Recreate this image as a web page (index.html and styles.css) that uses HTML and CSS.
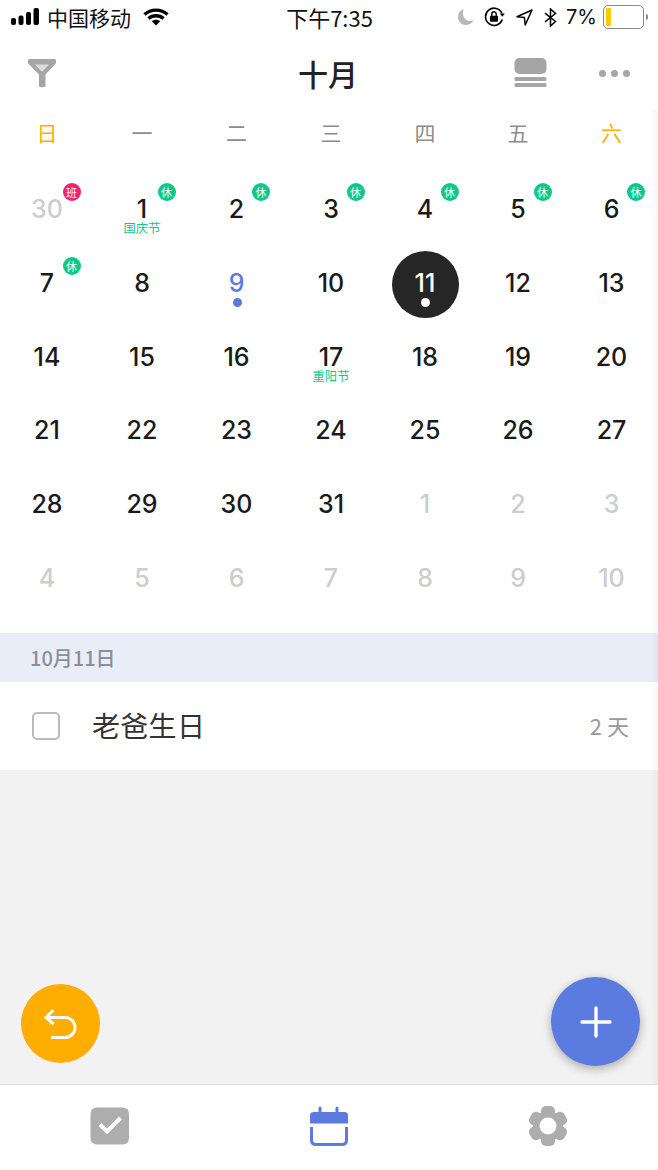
FILE: index.html
```html
<!doctype html>
<html lang="zh-CN">
  <head>
    <title>日历</title>
    <meta charset="UTF-8">
    <meta name="viewport" content="width=device-width, initial-scale=1">
    <link rel="stylesheet" href="styles.css">
  </head>
  <body>
<div class="phone">
  <div class="status">
    <div class="status-left">
      <svg class="signal" width="29" height="18" viewBox="0 0 29 18"><rect x="0" y="10" width="5" height="7" rx="2"/><rect x="7.500" y="7.500" width="5" height="9.500" rx="2"/><rect x="15" y="4" width="5" height="13" rx="2"/><rect x="22.500" y="0" width="5.500" height="17" rx="2"/></svg>
      <span class="carrier">中国移动</span>
      <svg class="wifi" width="26" height="18" viewBox="0 0 26 18"><path d="M1.500 6.500C8 .7 18 .7 24.500 6.500M5.500 10.500C9.800 6.800 16.200 6.800 20.500 10.500" fill="none" stroke="#000" stroke-width="3.400"/><path d="M8.800 13.200C11.200 11.200 14.800 11.200 17.200 13.200L13 17.500Z"/></svg>
    </div>
    <div class="clock">下午7:35</div>
    <div class="status-right">
      <svg width="18" height="18" viewBox="0 0 18 18"><path d="M6.500 1C3 2.500 1 5.500 1 9c0 4.500 3.500 8 8 8 3.200 0 6.200-1.800 7.800-4.800-1 .5-2.300.8-3.500.8C9 13 6 9.800 6 5.800c0-1.700.1-3.200.5-4.800Z" fill="#b8b8b8"/></svg>
      <svg class="gap-m" width="21" height="20" viewBox="0 0 21 20"><path d="M18.300 12.500A8.600 8.600 0 1 1 18 6.300" fill="none" stroke="#000" stroke-width="1.600"/><path d="M15.800 6.500h5l-2.500 3.200Z"/><rect x="6" y="8.800" width="8" height="6" rx="1"/><path d="M7.800 9V7a2.200 2.200 0 0 1 4.400 0v2" fill="none" stroke="#000" stroke-width="1.400"/></svg>
      <svg class="gap-s" width="17" height="17" viewBox="0 0 17 17"><path d="M16 1 1 7.800l7.400.8.800 7.400Z" fill="none" stroke="#000" stroke-width="1.500" stroke-linejoin="round"/></svg>
      <svg class="gap-s" width="13" height="19" viewBox="0 0 13 19"><path d="M1 5.200 11.500 13.500 6.500 18V1l5 4.500L1 13.800" fill="none" stroke="#000" stroke-width="1.500"/></svg>
      <span class="pct">7%</span>
      <div class="battery"><div class="charge"></div></div>
      <div class="nub"></div>
    </div>
  </div>

  <header class="nav">
    <svg class="nav-filter" width="30" height="30" viewBox="0 0 30 30"><path d="M1 2.500Q1 1 2.500 1h25Q29 1 29 2.500v2.800L18.500 16.500V28.500Q15 30 12 28.500V16.500L1 5.300Z" fill="#a5a5a5"/><path d="M8 6.500h14l-6 6.500h-2Z" fill="#fff" opacity=".6"/></svg>
    <h1 class="nav-title">十月</h1>
    <svg class="nav-view" width="33" height="30" viewBox="0 0 33 30"><rect x="0.500" y="0" width="32" height="16" rx="5" fill="#a5a5a5"/><rect x="0.500" y="19" width="32" height="4" rx="1.500" fill="#a5a5a5"/><rect x="0.500" y="25" width="32" height="4" rx="1.500" fill="#a5a5a5"/></svg>
    <div class="nav-more"><i></i><i></i><i></i></div>
  </header>

  <div class="weekdays">
    <span class="weekend">日</span><span>一</span><span>二</span><span>三</span><span>四</span><span>五</span><span class="weekend">六</span>
  </div>

  <div class="month">
    <div class="day off">30<b class="badge work">班</b></div>
    <div class="day">1<b class="badge">休</b><small>国庆节</small></div>
    <div class="day">2<b class="badge">休</b></div>
    <div class="day">3<b class="badge">休</b></div>
    <div class="day">4<b class="badge">休</b></div>
    <div class="day">5<b class="badge">休</b></div>
    <div class="day">6<b class="badge">休</b></div>

    <div class="day">7<b class="badge">休</b></div>
    <div class="day">8</div>
    <div class="day has-event">9<i class="dot"></i></div>
    <div class="day">10</div>
    <div class="day today">11<i class="dot"></i></div>
    <div class="day">12</div>
    <div class="day">13</div>

    <div class="day">14</div>
    <div class="day">15</div>
    <div class="day">16</div>
    <div class="day">17<small>重阳节</small></div>
    <div class="day">18</div>
    <div class="day">19</div>
    <div class="day">20</div>

    <div class="day">21</div>
    <div class="day">22</div>
    <div class="day">23</div>
    <div class="day">24</div>
    <div class="day">25</div>
    <div class="day">26</div>
    <div class="day">27</div>

    <div class="day">28</div>
    <div class="day">29</div>
    <div class="day">30</div>
    <div class="day">31</div>
    <div class="day off">1</div>
    <div class="day off">2</div>
    <div class="day off">3</div>

    <div class="day off">4</div>
    <div class="day off">5</div>
    <div class="day off">6</div>
    <div class="day off">7</div>
    <div class="day off">8</div>
    <div class="day off">9</div>
    <div class="day off">10</div>
  </div>

  <div class="date-bar">10月11日</div>
  <div class="todo">
    <div class="check"></div>
    <div class="todo-name">老爸生日</div>
    <div class="todo-left">2 天</div>
  </div>
  <div class="empty"></div>

  <nav class="tabs">
    <svg width="40" height="40" viewBox="0 0 40 40"><rect x="0.500" y="1.500" width="38.500" height="37" rx="6" fill="#adadad"/><path d="M10 18.500 17 25.500 30.500 12" fill="none" stroke="#fff" stroke-width="4"/></svg>
    <svg width="40" height="40" viewBox="0 0 40 40"><path d="M11 2v5M28 2v5" stroke="#5c7bde" stroke-width="3" stroke-linecap="round"/><path d="M1 17.500V9.500q0-3.500 3.500-3.500h31q3.500 0 3.500 3.500v8Z" fill="#5c7bde"/><path d="M2.500 21V34q0 4.500 4.500 4.500h26q4.500 0 4.500-4.500V21" fill="none" stroke="#5c7bde" stroke-width="3"/></svg>
    <svg width="40" height="40" viewBox="0 0 40 40"><g fill="#adadad"><circle cx="20" cy="20" r="15"/><rect x="13" y="0" width="14" height="40" rx="5"/><rect x="13" y="0" width="14" height="40" rx="5" transform="rotate(60 20 20)"/><rect x="13" y="0" width="14" height="40" rx="5" transform="rotate(120 20 20)"/></g><circle cx="20" cy="20" r="8.500" fill="#fff"/></svg>
  </nav>

  <button class="fab fab-back"><svg width="34" height="32" viewBox="0 0 34 32"><path d="M9.500 2 2 9.500 9.500 16M2.500 9.500H21a9.500 9.500 0 0 1 0 20H7" fill="none" stroke="#fff" stroke-width="3"/></svg></button>
  <button class="fab fab-add"><svg width="32" height="32" viewBox="0 0 32 32"><path d="M16 2v28M2 16h28" stroke="#fff" stroke-width="3.400" stroke-linecap="round"/></svg></button>
  <div class="edge"></div>
</div>
  </body>
</html>
```
FILE: styles.css
```css
html, body {
  margin: 0;
  font-family: Inter, "Noto Sans CJK SC", sans-serif;
  background: #fff;
}
.phone {
  position: relative;
  width: 658px;
  height: 1170px;
  overflow: hidden;
  display: flex;
  flex-direction: column;
}

/* status bar */
.status {
  height: 36px;
  box-sizing: border-box;
  padding: 0 10px 2px 11px;
  display: grid;
  grid-template-columns: 1fr auto 1fr;
  align-items: center;
  font-size: 21px;
  color: #111;
}
.status-left, .status-right {
  display: flex;
  align-items: center;
}
.status-right {
  justify-content: flex-end;
}
.carrier {
  margin: 0 12px 0 7px;
  font-family: "Noto Sans CJK SC", sans-serif;
}
.clock {
  font-family: "Noto Sans CJK SC", sans-serif;
  font-size: 22px;
}
.gap-m { margin-left: 9px; }
.gap-s { margin-left: 11px; }
.pct {
  margin: 0 6px 0 9px;
  font-size: 20px;
}
.battery {
  width: 35px;
  height: 18px;
  border: 1.5px solid #8a8a8a;
  border-radius: 5px;
  padding: 2px;
  display: flex;
  box-sizing: content-box;
}
.charge {
  width: 5px;
  background: #ffcc00;
  border-radius: 1px;
}
.nub {
  width: 2px;
  height: 6px;
  margin-left: 2px;
  background: #8a8a8a;
  border-radius: 0 2px 2px 0;
}

/* nav */
.nav {
  height: 74px;
  display: flex;
  align-items: center;
  padding: 0 27px;
}
.nav-title {
  margin: 0 0 0 241px;
  font-size: 30px;
  font-weight: 500;
  font-family: "Noto Sans CJK SC", sans-serif;
  color: #222;
}
.nav-view {
  margin-left: 156px;
}
.nav-more {
  margin-left: 52px;
  display: flex;
  gap: 5px;
}
.nav-more i {
  width: 7px;
  height: 7px;
  border-radius: 50%;
  background: #a5a5a5;
}

/* calendar */
.weekdays, .month {
  display: grid;
  grid-template-columns: 94px 96px 93px 96px 92px 94px 93px;
  text-align: center;
}
.weekdays {
  height: 61px;
  padding-top: 7px;
  box-sizing: border-box;
  font: 21px/30px "Noto Sans CJK SC", sans-serif;
  color: #8c8c8c;
}
.weekend {
  color: #ffae00;
}
.month {
  grid-auto-rows: 73.800px;
  height: 462px;
}
.day {
  position: relative;
  height: 74px;
  font-size: 25px;
  font-weight: 550;
  line-height: 76px;
  color: #1a1a1a;
}
.day.off {
  color: #cdcdcd;
}
.day.has-event {
  color: #5c7bde;
}
.badge {
  position: absolute;
  top: 12px;
  left: 50%;
  margin-left: 15.500px;
  width: 18px;
  height: 18px;
  border-radius: 50%;
  background: #0cc98a;
  color: #fff;
  font: 11px/18px "Noto Sans CJK SC", sans-serif;
}
.badge.work {
  background: #f5206e;
}
.day small {
  position: absolute;
  left: 0;
  right: 0;
  top: 49px;
  font: 12.300px/16px "Noto Sans CJK SC", sans-serif;
  color: #0cc98a;
}
.dot {
  position: absolute;
  left: 50%;
  top: 53px;
  margin-left: -4px;
  width: 9px;
  height: 9px;
  border-radius: 50%;
  background: #5c7bde;
}
.today {
  color: #fff;
  z-index: 0;
}
.today::before {
  content: "";
  position: absolute;
  z-index: -1;
  left: 50%;
  top: 6px;
  margin-left: -33.500px;
  width: 67px;
  height: 67px;
  border-radius: 50%;
  background: #262626;
}
.today .dot {
  background: #fff;
}

/* list */
.date-bar {
  height: 49px;
  padding-left: 30px;
  background: #e9edf8;
  color: #8a8f99;
  font: 500 20px/49px "Noto Sans CJK SC", sans-serif;
}
.todo {
  height: 88px;
  display: flex;
  align-items: center;
  padding: 0 29px 0 32px;
}
.check {
  width: 24px;
  height: 24px;
  border: 2px solid #bbb;
  border-radius: 5px;
}
.todo-name {
  flex: 1;
  margin: -3px 0 0 32px;
  font: 28px "Noto Sans CJK SC", sans-serif;
  letter-spacing: .3px;
  color: #333;
}
.todo-left {
  margin-top: -3px;
  font: 22px "Noto Sans CJK SC", sans-serif;
  color: #9a9a9a;
}
.empty {
  flex: 1;
  background: #f2f2f2;
}

/* tab bar */
.tabs {
  height: 86px;
  box-sizing: border-box;
  border-top: 1px solid #dcdcdc;
  padding-top: 21px;
  display: grid;
  grid-template-columns: repeat(3, 1fr);
  justify-items: center;
  align-items: start;
}

/* floating buttons */
.fab {
  position: absolute;
  border: 0;
  padding: 0;
  border-radius: 50%;
  display: flex;
  align-items: center;
  justify-content: center;
}
.fab-back {
  left: 21px;
  top: 984px;
  width: 79px;
  height: 79px;
  background: #ffae00;
}
.fab-add {
  left: 551px;
  top: 977px;
  width: 89px;
  height: 89px;
  background: #5c7bde;
  box-shadow: 0 3px 10px rgba(0, 0, 0, .3);
}
.edge {
  position: absolute;
  top: 110px;
  right: 0;
  width: 8px;
  height: 974px;
  background: linear-gradient(to right, rgba(0,0,0,0), rgba(0,0,0,.03));
}
```
